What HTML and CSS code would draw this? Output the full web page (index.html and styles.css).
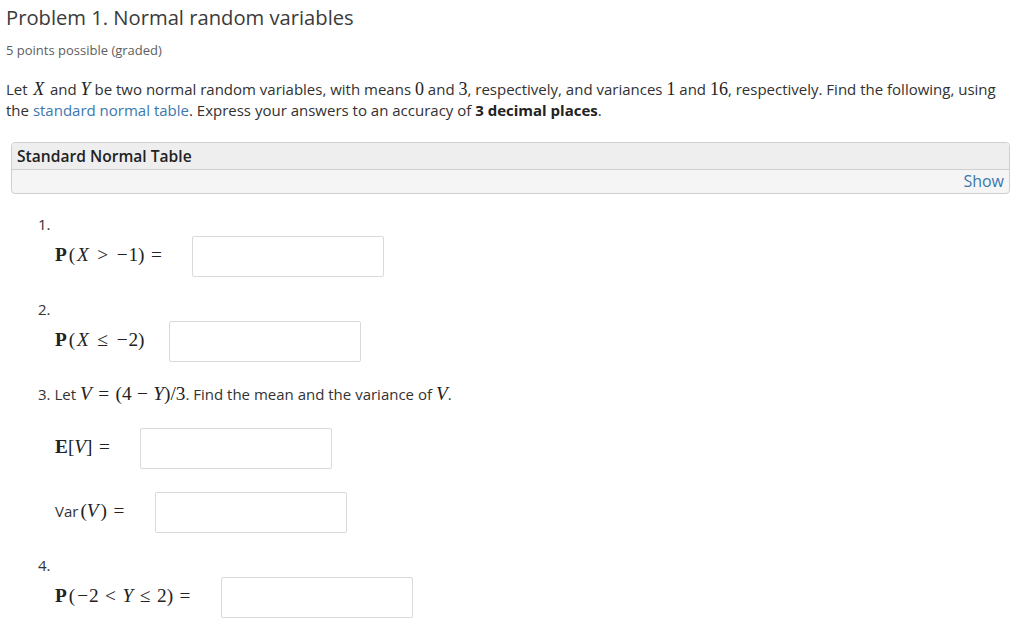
FILE: index.html
```html
<!DOCTYPE html>
<html>
<head>
<meta charset="utf-8">
<link rel="stylesheet" href="styles.css">
</head>
<body>
<div class="page">
  <h2 class="title">Problem 1. Normal random variables</h2>
  <div class="points">5 points possible (graded)</div>
  <p class="intro">Let <span class="mi"><i class="wx">X</i></span> and <span class="mi"><i>Y</i></span> be two normal random variables, with means <span class="mi">0</span> and <span class="mi">3</span>, respectively, and variances <span class="mi">1</span> and <span class="mi">16</span>, respectively. Find the following, using the <a class="link" href="#">standard normal table</a>. Express your answers to an accuracy of <b>3 decimal places</b>.</p>

  <div class="snt">
    <div class="snt-head">Standard Normal Table</div>
    <div class="snt-body"><a class="link" href="#">Show</a></div>
  </div>

  <div class="items">
    <div class="item">
      <div class="num">1.</div>
      <div class="row">
        <span class="m"><b class="wp">P</b>(<i class="wx">X</i><span class="op rel">&gt;</span><span class="op un">−</span>1)<span class="op rel">=</span></span>
        <div class="input"></div>
      </div>
    </div>
    <div class="item">
      <div class="num">2.</div>
      <div class="row">
        <span class="m"><b class="wp">P</b>(<i class="wx">X</i><span class="op rel">≤</span><span class="op un">−</span>2)</span>
        <div class="input"></div>
      </div>
    </div>
    <div class="item">
      <div class="num">3. Let <span class="m"><i>V</i><span class="op rel">=</span>(4<span class="op bin">−</span><i>Y</i>)/3</span>. Find the mean and the variance of <span class="m"><i>V</i></span>.</div>
      <div class="row row-gap">
        <span class="m"><b>E</b>[<i>V</i>]<span class="op rel">=</span></span>
        <div class="input"></div>
      </div>
      <div class="row row-gap">
        <span class="m"><span class="txt">Var</span>(<i class="wv">V</i>)<span class="op rel">=</span></span>
        <div class="input"></div>
      </div>
    </div>
    <div class="item">
      <div class="num">4.</div>
      <div class="row">
        <span class="m"><b class="wp">P</b>(<span class="op un">−</span>2<span class="op rel">&lt;</span><i>Y</i><span class="op rel">≤</span>2)<span class="op rel">=</span></span>
        <div class="input"></div>
      </div>
    </div>
  </div>
</div>
</body>
</html>
```

FILE: styles.css
```css
html, body {
  margin: 0;
  padding: 0;
  background: #fff;
}
body {
  font-family: "Open Sans", "Liberation Sans", sans-serif;
  color: #313131;
  font-size: 15px;
}
.page {
  padding: 3px 6px 0 6px;
}
.title {
  margin: 0;
  font-size: 20.2px;
  line-height: 28px;
  font-weight: 400;
  color: #3b3b3b;
}
.points {
  margin-top: 11px;
  font-size: 13px;
  line-height: 16px;
  color: #5e5e5e;
}
.intro {
  margin: 21px 0 0 0;
  padding-right: 12px;
  line-height: 21px;
  font-size: 15px;
}
.intro b {
  font-weight: 700;
  color: #222;
}
.mi {
  font-family: "Liberation Serif", "DejaVu Serif", serif;
  font-size: 18px;
  line-height: 1;
  color: #222;
}
.m {
  font-family: "Liberation Serif", "DejaVu Serif", serif;
  font-size: 19.3px;
  line-height: 1;
  color: #222;
  white-space: nowrap;
}
.row .m {
  margin-bottom: 3px;
}
.m b {
  font-weight: 700;
}
.m i, .mi i {
  font-style: italic;
}
.wx {
  padding: 0 0.1em;
}
.wp {
  padding-right: 0.1em;
}
.wv {
  padding-right: 0.1em;
}
.m .txt {
  font-family: "Open Sans", "Liberation Sans", sans-serif;
  font-size: 15px;
  color: #333;
  margin-right: 2px;
}
.op {
  display: inline-block;
  width: 0.68em;
  text-align: center;
}
.op.un {
  text-align: right;
  padding-right: 0.04em;
}
.rel {
  margin: 0 0.2778em;
}
.bin {
  margin: 0 0.2222em;
}
.link {
  color: #3a78ad;
  text-decoration: none;
}
.snt {
  margin: 21px 8px 0 5px;
  border: 1px solid #cfcfcf;
  border-radius: 4px;
  background: #f5f5f5;
  overflow: hidden;
}
.snt-head {
  background: #eeeeee;
  border-bottom: 1px solid #cfcfcf;
  height: 26px;
  line-height: 26px;
  padding-left: 5px;
  font-size: 15.6px;
  font-weight: 600;
  color: #222;
}
.snt-body {
  height: 23px;
  line-height: 23px;
  text-align: right;
  padding-right: 5px;
  font-size: 16px;
}
.items {
  margin-top: 20px;
  padding-left: 32px;
}
.item {
  margin-bottom: 22px;
}
.num {
  line-height: 21px;
  color: #333;
}
.row {
  display: flex;
  align-items: center;
  gap: 24px;
  padding-left: 17px;
  margin-top: 1px;
}
.row-gap {
  margin-top: 23px;
}
.input {
  width: 190px;
  height: 39px;
  border: 1px solid #d9d9d9;
  border-radius: 2px;
  background: #fff;
}
```
